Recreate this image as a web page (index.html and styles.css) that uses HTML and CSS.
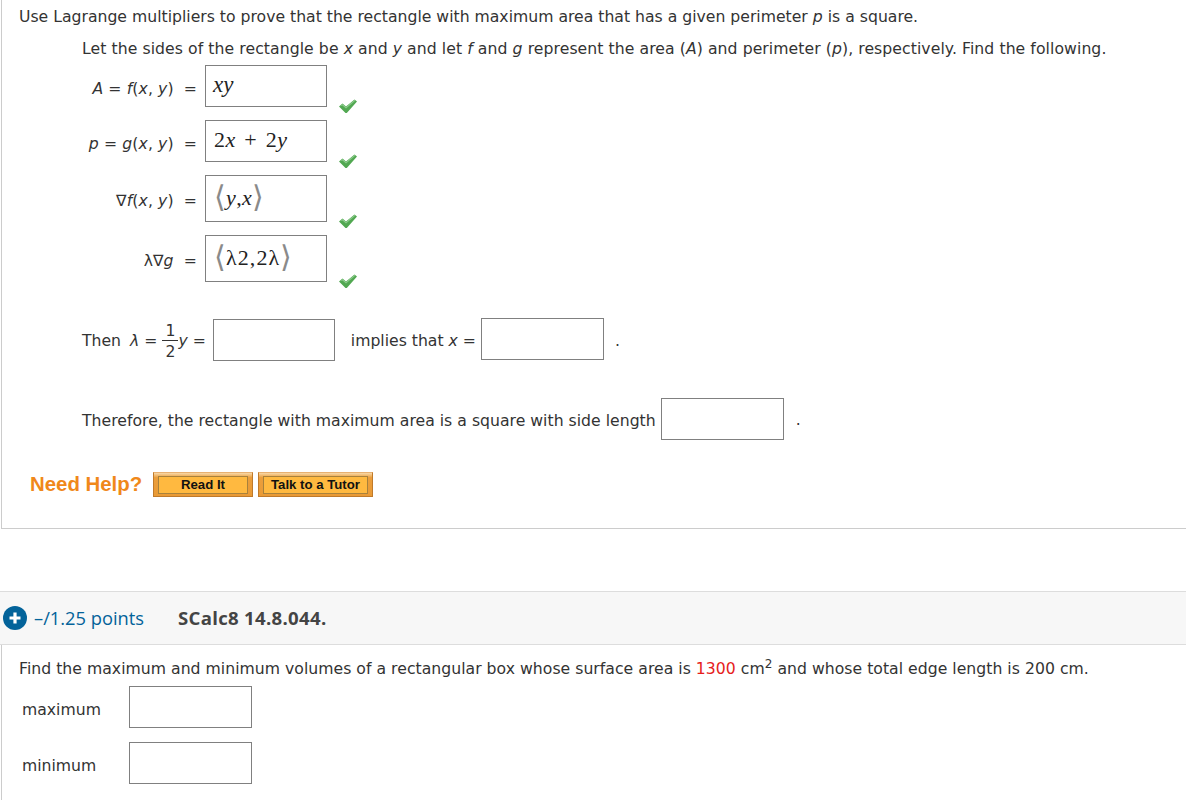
FILE: index.html
```html
<!DOCTYPE html>
<html lang="en">
<head>
<meta charset="utf-8">
<title>Lagrange multipliers</title>
<link rel="stylesheet" href="styles.css">
</head>
<body>
<section class="panel first">
  <p class="lead">Use Lagrange multipliers to prove that the rectangle with maximum area that has a given perimeter <i>p</i> is a square.</p>
  <div class="inner">
    <p class="intro">Let the sides of the rectangle be <i>x</i> and <i>y</i> and let <i>f</i> and <i>g</i> represent the area (<i>A</i>) and perimeter (<i>p</i>), respectively. Find the following.</p>
    <div class="answers">
      <div class="label"><i>A</i> = <i>f</i>(<i>x</i>, <i>y</i>)&nbsp; =</div>
      <div class="box r1"><span class="math m1"><i>xy</i></span></div>
      <svg class="check" viewBox="0 0 18 14"><path d="M0 7.5 L3.5 4.5 L7 7.5 L15.5 0.5 L18 2.5 L7.8 14 L6.5 14 Z" fill="#52a852"/><path d="M1 7.2 L3.5 5 L7 8 L15.5 1 L16.5 1.6 L7 9.5 L3.5 6.5 Z" fill="#8ccb8c"/></svg>

      <div class="label"><i>p</i> = <i>g</i>(<i>x</i>, <i>y</i>)&nbsp; =</div>
      <div class="box r1"><span class="math m2">2<i>x</i> + 2<i>y</i></span></div>
      <svg class="check" viewBox="0 0 18 14"><path d="M0 7.5 L3.5 4.5 L7 7.5 L15.5 0.5 L18 2.5 L7.8 14 L6.5 14 Z" fill="#52a852"/><path d="M1 7.2 L3.5 5 L7 8 L15.5 1 L16.5 1.6 L7 9.5 L3.5 6.5 Z" fill="#8ccb8c"/></svg>

      <div class="label tall">∇<i>f</i>(<i>x</i>, <i>y</i>)&nbsp; =</div>
      <div class="box r2"><span class="math m3"><span class="ang">⟨</span><i>y</i>,<i>x</i><span class="ang">⟩</span></span></div>
      <svg class="check" viewBox="0 0 18 14"><path d="M0 7.5 L3.5 4.5 L7 7.5 L15.5 0.5 L18 2.5 L7.8 14 L6.5 14 Z" fill="#52a852"/><path d="M1 7.2 L3.5 5 L7 8 L15.5 1 L16.5 1.6 L7 9.5 L3.5 6.5 Z" fill="#8ccb8c"/></svg>

      <div class="label tall">λ∇<i>g</i>&nbsp; =</div>
      <div class="box r2"><span class="math m3 m4"><span class="ang">⟨</span>λ2,2λ<span class="ang">⟩</span></span></div>
      <svg class="check" viewBox="0 0 18 14"><path d="M0 7.5 L3.5 4.5 L7 7.5 L15.5 0.5 L18 2.5 L7.8 14 L6.5 14 Z" fill="#52a852"/><path d="M1 7.2 L3.5 5 L7 8 L15.5 1 L16.5 1.6 L7 9.5 L3.5 6.5 Z" fill="#8ccb8c"/></svg>
    </div>

    <div class="then">
      <span class="tx">Then</span>
      <span class="lam tx"><i>λ</i> =</span>
      <span class="frac"><span class="num">1</span><span class="den">2</span></span>
      <span class="yeq tx"><i>y</i> =</span>
      <span class="box input"></span>
      <span class="implies tx">implies that <i>x</i> =</span>
      <span class="box input up"></span>
      <span class="dot tx">.</span>
    </div>

    <div class="therefore">
      <span class="tx lower">Therefore, the rectangle with maximum area is a square with side length</span>
      <span class="box input"></span>
      <span class="dot tx">.</span>
    </div>
  </div>

  <div class="help">
    <span class="need">Need Help?</span>
    <span class="btn read"><span class="btn-in">Read It</span></span>
    <span class="btn tutor"><span class="btn-in">Talk to a Tutor</span></span>
  </div>
</section>

<header class="bar">
  <svg class="plus" viewBox="0 0 24 24"><circle cx="12" cy="12" r="12" fill="#03639a"/><path d="M12 6.5v11M6.5 12h11" stroke="#fff" stroke-width="3.2"/></svg>
  <span class="points">–/1.25 points</span>
  <span class="code">SCalc8 14.8.044.</span>
</header>

<section class="panel second">
  <p class="find">Find the maximum and minimum volumes of a rectangular box whose surface area is <span class="red">1300</span> cm<sup>2</sup> and whose total edge length is 200 cm.</p>
  <div class="volumes">
    <span class="vlabel">maximum</span><span class="box input"></span>
    <span class="vlabel">minimum</span><span class="box input"></span>
  </div>
</section>
</body>
</html>
```
FILE: styles.css
```css
* { box-sizing: border-box; }
html, body { margin: 0; padding: 0; }
body {
  width: 1186px;
  height: 800px;
  overflow: hidden;
  background: #fff;
  color: #333;
  font-family: "DejaVu Sans", Verdana, sans-serif;
  font-size: 15.67px;
  line-height: 18px;
}
p { margin: 0; }
.panel {
  margin-left: 1px;
  border-left: 1px solid #ccc;
}
.first {
  height: 529px;
  border-bottom: 1px solid #ccc;
  padding: 8px 0 0 17px;
}
.inner { padding-left: 63px; }
.intro { margin-top: 14px; letter-spacing: 0.07px; }
.answers {
  display: grid;
  grid-template-columns: 115px 122px 18px;
  column-gap: 8px;
  margin: 7px 0 0 0;
  align-items: center;
}
.label { text-align: right; margin-bottom: 7px; white-space: nowrap; letter-spacing: 0.1px; }
.tall { margin-bottom: 9px; }
.box {
  display: block;
  border: 1px solid #808080;
  background: #fff;
  width: 122px;
}
.r1 { height: 42px; margin-bottom: 13px; }
.r2 { height: 47px; margin-bottom: 13px; }
.check {
  width: 18px;
  height: 14px;
  margin-left: 4px;
  align-self: end;
  margin-bottom: 7px;
}
.math {
  display: block;
  font-family: "Liberation Serif", serif;
  color: #222;
  white-space: nowrap;
}
.m1 { font-size: 23px; padding: 10px 0 0 7px; }
.m2 { font-size: 22px; padding: 10px 0 0 8px; word-spacing: 2.5px; letter-spacing: 0.5px; }
.m3 { font-size: 22px; padding: 12px 0 0 8px; letter-spacing: 0.4px; }
.m4 { letter-spacing: 1.1px; }
.ang {
  font-family: "DejaVu Sans", sans-serif;
  font-size: 30px;
  font-weight: 200;
  line-height: 18px;
  vertical-align: -2px;
  color: #8a8a8a;
  letter-spacing: 0;
}
.then {
  display: flex;
  align-items: center;
  margin-top: 24px;
  height: 42px;
}
.tx { position: relative; top: 1px; }
.lower { top: 2px; }
.lam { margin-left: 9px; }
.frac {
  display: inline-flex;
  flex-direction: column;
  align-items: center;
  width: 16px;
  margin-left: 5px;
  line-height: 15px;
  position: relative;
  top: 1px;
}
.num { border-bottom: 1px solid #333; width: 100%; text-align: center; padding-bottom: 2px; }
.den { padding-top: 3px; }
.yeq { margin-right: 7px; }
.input { width: 122px; height: 42px; flex: none; }
.implies { margin: 0 5px 0 16px; }
.up { transform: translateY(-1px); width: 123px; }
.dot { margin-left: 12px; }
.then .dot { margin-left: 11px; }
.therefore {
  display: flex;
  align-items: center;
  margin-top: 37px;
  height: 42px;
  letter-spacing: 0.015px;
}
.therefore .input { margin-left: 5px; width: 123px; }
.help {
  display: flex;
  align-items: center;
  margin: 32px 0 0 11px;
  height: 25px;
}
.need {
  font-family: "Liberation Sans", Arial, sans-serif;
  font-weight: 700;
  font-size: 20.4px;
  color: #f0881a;
  width: 123px;
  position: relative;
  top: -1px;
}
.btn {
  display: block;
  height: 25px;
  border: 1px solid #c07a2a;
  border-top-color: #e8b070;
  background: linear-gradient(#f8d8a8, #eb9e3c 20%, #e99a35);
  padding: 3px 4px 2px;
}
.read { width: 100px; }
.tutor { width: 115px; margin-left: 5px; }
.btn-in {
  display: block;
  height: 18px;
  border: 1px solid #a8813c;
  background: #ffb940;
  text-align: center;
  color: #111;
  font-family: "Liberation Sans", Arial, sans-serif;
  font-weight: 700;
  font-size: 13.2px;
  line-height: 16px;
  white-space: nowrap;
}
.bar {
  display: flex;
  align-items: center;
  height: 54px;
  margin-top: 62px;
  background: #f7f7f7;
  border-top: 1px solid #ddd;
  border-bottom: 1px solid #ddd;
  padding-left: 3px;
}
.plus { width: 24px; height: 24px; }
.points {
  font-family: "Open Sans", "Noto Sans", sans-serif;
  font-size: 18.3px;
  color: #03639a;
  margin-left: 7px;
}
.code {
  font-family: "Open Sans", "Noto Sans", sans-serif;
  font-size: 18.6px;
  font-weight: 700;
  color: #444;
  margin-left: 34px;
  letter-spacing: 0.3px;
}
.second { padding: 15px 0 0 17px; height: 160px; }
.find { letter-spacing: 0.025px; }
.red { color: #e61c1c; }
sup { font-size: 12px; line-height: 0; }
.volumes {
  display: grid;
  grid-template-columns: 107px 123px;
  row-gap: 14px;
  align-items: center;
  margin: 8px 0 0 3px;
}
.volumes .input { width: 123px; }
.vlabel { position: relative; top: 3px; }
```
